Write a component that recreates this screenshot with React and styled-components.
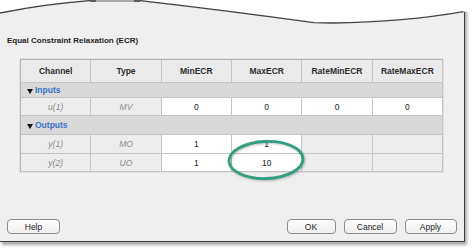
import React from "react";
import styled, { createGlobalStyle } from "styled-components";

const GlobalStyle = createGlobalStyle`
  html, body {
    margin: 0;
    padding: 0;
    background: #ffffff;
  }
  body {
    font-family: "Liberation Sans", Arial, sans-serif;
  }
  * {
    box-sizing: border-box;
  }
`;

const columns = ["Channel", "Type", "MinECR", "MaxECR", "RateMinECR", "RateMaxECR"];

const groups = [
  {
    name: "Inputs",
    height: 15,
    rows: [{ channel: "u(1)", type: "MV", values: ["0", "0", "0", "0"], editable: [true, true, true, true], height: 18 }],
  },
  {
    name: "Outputs",
    height: 19,
    rows: [
      { channel: "y(1)", type: "MO", values: ["1", "1", "", ""], editable: [true, true, false, false], height: 19 },
      { channel: "y(2)", type: "UO", values: ["1", "10", "", ""], editable: [true, true, false, false], height: 18 },
    ],
  },
];

function TornEdge() {
  return (
    <EdgeSvg width="474" height="26" viewBox="0 0 474 26">
      <path
        d="M0 0 L0 13 Q45 4 90 0.6 L140 0.6 Q230 11 314 22.7 L332 23 Q405 22 463.5 11.7 L474 11.7 L474 0 Z"
        fill="#ffffff"
      />
      <rect x="90" y="0" width="50" height="2" fill="#a9a9a9" />
      <rect x="90" y="0" width="6" height="2" fill="#5e5e5e" />
      <rect x="134" y="0" width="6" height="2" fill="#5e5e5e" />
      <path
        d="M0 13 Q45 4 90 0.6 M140 0.6 Q230 11 314 22.7 L332 23 Q405 22 463.5 11.7"
        fill="none"
        stroke="#444"
        strokeWidth="1.3"
      />
    </EdgeSvg>
  );
}

function Highlight() {
  return (
    <MarkSvg width="84" height="48" viewBox="0 0 84 48">
      <ellipse
        cx="42"
        cy="23"
        rx="37"
        ry="18.5"
        fill="none"
        stroke="#2f9d7f"
        strokeWidth="2.8"
        transform="rotate(-2 42 23)"
      />
    </MarkSvg>
  );
}

function App() {
  return (
    <>
      <GlobalStyle />
      <Page>
        <Dialog>
          <Title>Equal Constraint Relaxation (ECR)</Title>
          <Table>
            {columns.map((c) => (
              <HeadCell key={c}>{c}</HeadCell>
            ))}
            {groups.map((g) => (
              <React.Fragment key={g.name}>
                <GroupCell h={g.height}>
                  <Arrow />
                  {g.name}
                </GroupCell>
                {g.rows.map((r) => (
                  <React.Fragment key={r.channel}>
                    <NameCell h={r.height}>{r.channel}</NameCell>
                    <NameCell h={r.height}>{r.type}</NameCell>
                    {r.values.map((v, i) => (
                      <ValueCell key={i} h={r.height} editable={r.editable[i]}>
                        {v}
                      </ValueCell>
                    ))}
                  </React.Fragment>
                ))}
              </React.Fragment>
            ))}
          </Table>
          <Footer>
            <Button w={53}>Help</Button>
            <ButtonGroup>
              <Button w={49}>OK</Button>
              <Button w={53}>Cancel</Button>
              <Button w={52}>Apply</Button>
            </ButtonGroup>
          </Footer>
          <Highlight />
        </Dialog>
        <TornEdge />
      </Page>
    </>
  );
}

export default App;

const Page = styled.div`
  position: relative;
  width: 474px;
  height: 251px;
  overflow: hidden;
  background: #ffffff;
`;

const Dialog = styled.div`
  position: relative;
  width: 464.5px;
  height: 242px;
  background: #efefef;
  border-right: 1.5px solid #3d3d3d;
  border-bottom: 1.5px solid #3d3d3d;
  box-shadow: 2px 3px 3px rgba(0, 0, 0, 0.35);
  padding: 36px 0 7px 0;
  display: flex;
  flex-direction: column;
`;

const EdgeSvg = styled.svg`
  position: absolute;
  top: 0;
  left: 0;
`;

const MarkSvg = styled.svg`
  position: absolute;
  left: 224px;
  top: 137px;
  filter: drop-shadow(1px 1px 1px rgba(0, 0, 0, 0.25));
`;

const Title = styled.div`
  margin-left: 7px;
  font-size: 8px;
  font-weight: bold;
  line-height: 10px;
  color: #1e1e1e;
`;

const Table = styled.div`
  margin: 13px 0 0 20px;
  width: 423px;
  display: grid;
  grid-template-columns: repeat(6, 1fr);
  border-top: 1px solid #b4b4b4;
  border-left: 1px solid #b4b4b4;
  box-shadow: 0 0 0 0.5px #d0d0d0;
`;

const Cell = styled.div`
  height: ${({ h }) => h}px;
  border-right: 1px solid #c4c4c4;
  border-bottom: 1px solid #c4c4c4;
  display: flex;
  align-items: center;
  justify-content: center;
  font-size: 8.5px;
  color: #222;
`;

const HeadCell = styled(Cell)`
  height: 23px;
  background: #eaeaea;
  font-size: 8.5px;
  font-weight: bold;
  color: #2c2c2c;
`;

const GroupCell = styled(Cell)`
  grid-column: 1 / -1;
  justify-content: flex-start;
  padding-left: 6px;
  background: #d9d9d9;
  font-size: 8.5px;
  font-weight: bold;
  color: #3a73c8;
`;

const Arrow = styled.span`
  width: 0;
  height: 0;
  margin: 2px 2px 0 0;
  border-left: 3px solid transparent;
  border-right: 3px solid transparent;
  border-top: 5px solid #111;
`;

const NameCell = styled(Cell)`
  background: #ececec;
  font-style: italic;
  color: #8c8c8c;
`;

const ValueCell = styled(Cell)`
  background: ${({ editable }) => (editable ? "#ffffff" : "#ececec")};
`;

const Footer = styled.div`
  margin-top: auto;
  padding: 0 7px;
  display: flex;
  justify-content: space-between;
  align-items: center;
`;

const ButtonGroup = styled.div`
  display: flex;
  gap: 8px;
`;

const Button = styled.button`
  width: ${({ w }) => w}px;
  height: 15px;
  padding: 0;
  border: 1px solid #8c8c8c;
  border-radius: 4px;
  background: linear-gradient(#fdfdfd, #f0f0f0);
  font-family: "Liberation Sans", Arial, sans-serif;
  font-size: 8.5px;
  color: #222;
`;
